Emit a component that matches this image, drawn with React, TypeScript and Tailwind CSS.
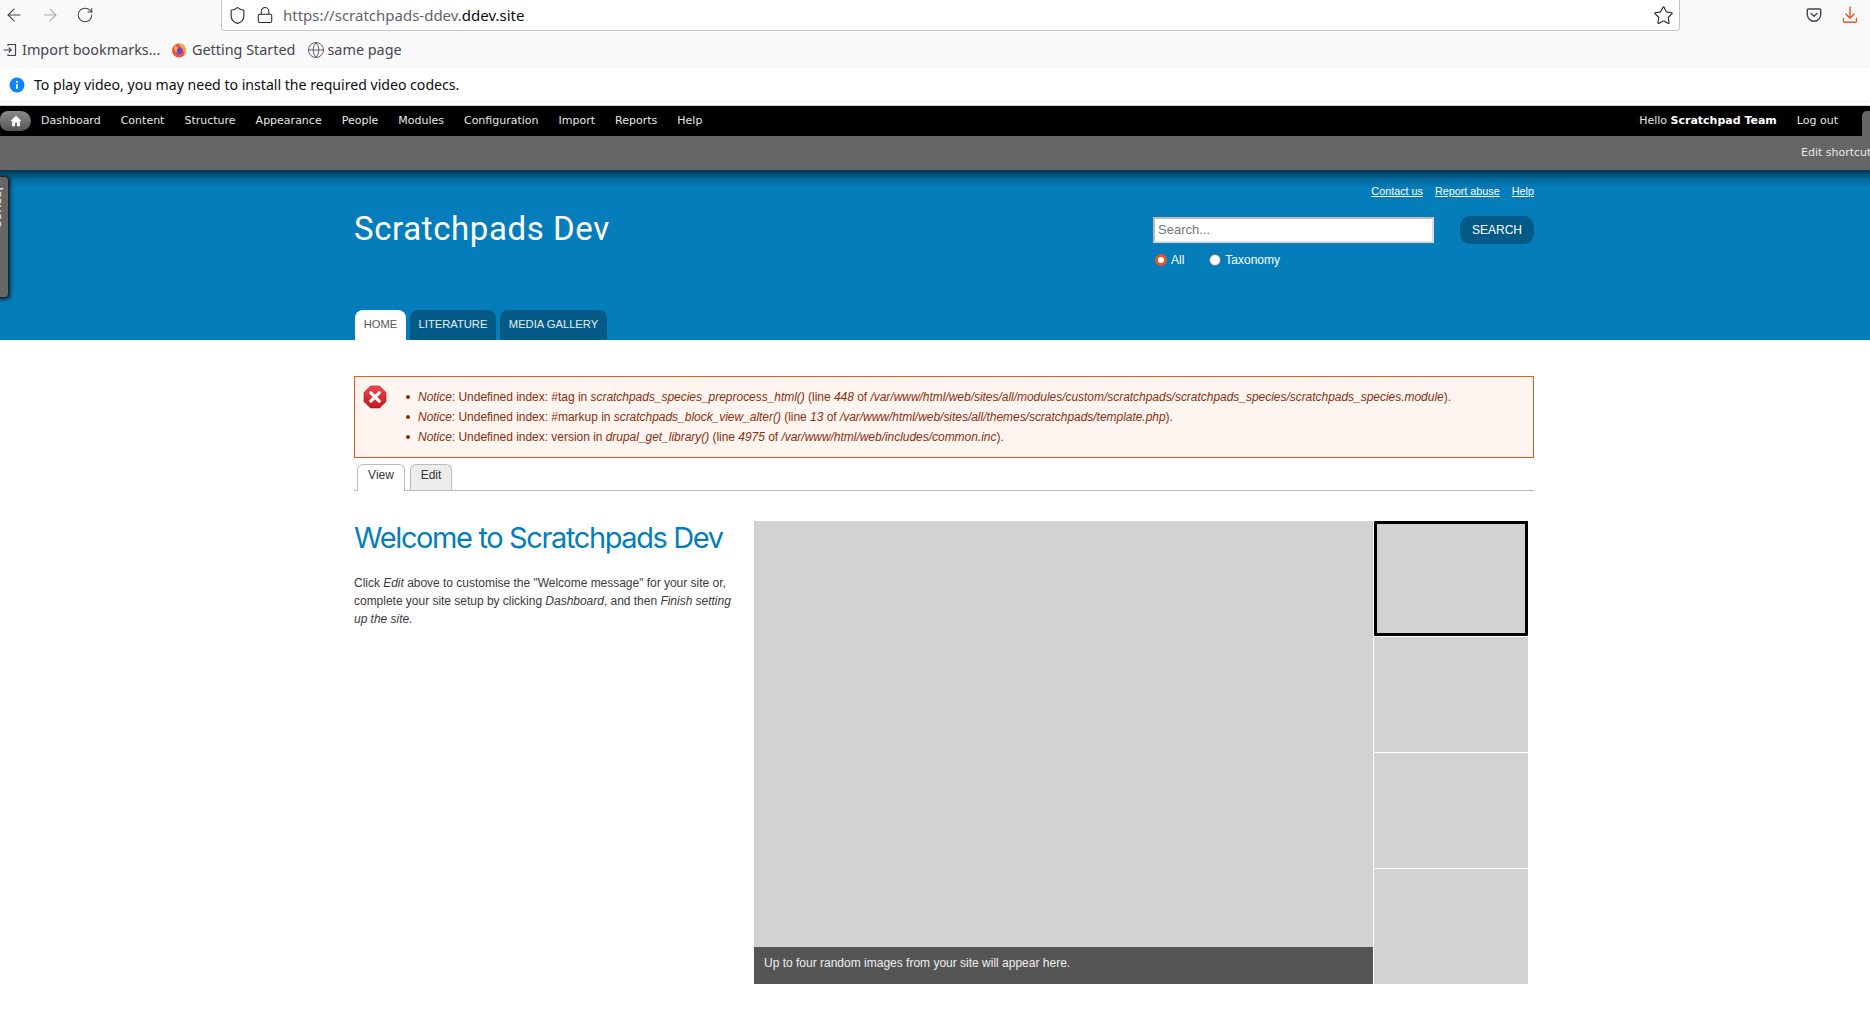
import React from "react";
import { ArrowLeft, ArrowRight, RotateCw, Shield, Lock, Star, Globe } from "lucide-react";

const adminLinks = ["Dashboard", "Content", "Structure", "Appearance", "People", "Modules", "Configuration", "Import", "Reports", "Help"];

const notices = [
  { index: "#tag", fn: "scratchpads_species_preprocess_html()", line: "448", file: "/var/www/html/web/sites/all/modules/custom/scratchpads/scratchpads_species/scratchpads_species.module" },
  { index: "#markup", fn: "scratchpads_block_view_alter()", line: "13", file: "/var/www/html/web/sites/all/themes/scratchpads/template.php" },
  { index: "version", fn: "drupal_get_library()", line: "4975", file: "/var/www/html/web/includes/common.inc" },
];

const FirefoxLogo = () => (
  <svg width="16" height="16" viewBox="0 0 16 16">
    <circle cx="8" cy="8.6" r="7" fill="#f5533d" />
    <path d="M8 1.6a7 7 0 0 1 7 7c0 2-1 4-2.6 5.2 1-2 .8-5-1.4-7C9.600 5.500 8.500 4 8 1.600z" fill="#ffa436" />
    <circle cx="8" cy="8.600" r="3.600" fill="#7a3fc4" />
    <path d="M4.400 3.400C5 5 6.500 5.500 8 5.600 5.800 6.500 5 9 6.200 11 3.800 10 2.500 6 4.400 3.400z" fill="#ffbd4f" />
  </svg>
);

const PocketIcon = () => (
  <svg width="16" height="16" viewBox="0 0 16 16" fill="none" stroke="#45454d" strokeWidth="1.4" strokeLinecap="round" strokeLinejoin="round">
    <path d="M2.200 2h11.600c.5 0 .9.400.9.900V7.500a6.700 6.700 0 0 1-13.400 0V2.900c0-.5.400-.9.900-.9z" />
    <path d="M5 6.500l3 2.800 3-2.800" />
  </svg>
);

const DownloadIcon = () => (
  <svg width="16" height="18" viewBox="0 0 16 18" fill="none" stroke="#e8562a" strokeWidth="1.4" strokeLinecap="round" strokeLinejoin="round">
    <path d="M8 1v11M3.800 8l4.200 4.200L12.200 8" />
    <path d="M1.500 12.500v2.800c0 .6.400 1 1 1h11c.6 0 1-.4 1-1v-2.800" />
  </svg>
);

const ImportIcon = () => (
  <svg width="14" height="14" viewBox="0 0 14 14" fill="none" stroke="#45454d" strokeWidth="1.2" strokeLinecap="round" strokeLinejoin="round">
    <path d="M5 2.500V1.500h7.500v11H5v-1" />
    <path d="M1 7h7M6 4.800L8.200 7 6 9.200" />
  </svg>
);

const InfoIcon = () => (
  <svg width="16" height="16" viewBox="0 0 16 16">
    <circle cx="8" cy="8" r="7.500" fill="#0a84ff" />
    <rect x="7.100" y="7" width="1.800" height="5" rx=".6" fill="#fff" />
    <circle cx="8" cy="4.800" r="1.100" fill="#fff" />
  </svg>
);

const ErrorIcon = () => (
  <svg width="24" height="24" viewBox="0 0 24 24">
    <defs>
      <linearGradient id="err" x1="0" y1="0" x2="0" y2="1">
        <stop offset="0" stopColor="#ee4a50" />
        <stop offset="1" stopColor="#c4141e" />
      </linearGradient>
    </defs>
    <path d="M7.500 1h9L23 7.500v9L16.500 23h-9L1 16.500v-9z" fill="url(#err)" stroke="#a01018" strokeWidth=".6" strokeLinejoin="round" />
    <path d="M7.800 7.800l8.400 8.400M16.200 7.800l-8.400 8.400" stroke="#fff" strokeWidth="3.200" strokeLinecap="round" />
  </svg>
);

const HomeIcon = () => (
  <svg width="12" height="12" viewBox="0 0 12 12" fill="#fff">
    <path d="M6 .8L.4 6h1.700v5.200h2.900V7.800h2v3.400h2.900V6h1.700z" />
  </svg>
);

const App = () => {
  return (
    <div className="h-[1018px] w-[1870px] overflow-hidden bg-white relative font-['Liberation_Sans',sans-serif]">
      {/* Browser chrome */}
      <div className="bg-[#f9f9fa] h-[68px] font-['Noto_Sans',sans-serif] text-[#45454d]">
        <div className="h-[31px] flex items-start">
          <div className="w-[221px] h-[30px] flex items-center pl-[4px] gap-[16px]">
            <ArrowLeft size={20} strokeWidth={1.3} />
            <ArrowRight size={20} strokeWidth={1.3} className="text-[#a8a8ad]" />
            <RotateCw size={18} strokeWidth={1.4} />
          </div>
          <div className="w-[1459px] h-[31px] bg-white border border-t-0 border-[#c4c4c8] rounded-b-[4px] flex items-center pl-[6px] pr-[5px]">
            <Shield size={19} strokeWidth={1.4} className="text-[#2a2a2e]" />
            <Lock size={18} strokeWidth={1.4} className="ml-[9px] text-[#2a2a2e]" />
            <span className="ml-[9px] text-[15px] text-[#63636b]">
              https://scratchpads-ddev.<span className="text-[#0c0c0d]">ddev.site</span>
            </span>
            <Star size={21} strokeWidth={1.3} className="ml-auto text-[#2a2a2e]" />
          </div>
          <div className="flex-1 h-[30px] flex items-center pl-[126px] gap-[20px]">
            <PocketIcon />
            <DownloadIcon />
          </div>
        </div>
        <div className="h-[37px] flex items-center pl-[3px] text-[14.4px] text-[#45454d]">
          <ImportIcon />
          <span className="ml-[5px] w-[149px]">Import bookmarks...</span>
          <FirefoxLogo />
          <span className="ml-[5px]">Getting Started</span>
          <Globe size={18} strokeWidth={1.1} className="ml-[12px]" />
          <span className="ml-[2px]">same page</span>
        </div>
      </div>
      <div className="h-[34px] bg-white flex items-center pl-[9px] border-b border-[#eeeeee] font-['Noto_Sans',sans-serif] text-[14.1px] text-[#0c0c0d]">
        <InfoIcon />
        <span className="ml-[9px]">To play video, you may need to install the required video codecs.</span>
      </div>
      <div className="h-[4px] bg-white border-b border-[#cfcfd1]" />

      {/* Admin toolbar */}
      <div className="h-[30px] bg-black flex items-center text-[#e8e8e8] text-[11px] font-['DejaVu_Sans',sans-serif] relative">
        <div className="w-[31px] h-[20px] rounded-r-[10px] rounded-l-[8px] bg-[linear-gradient(#8a8a8a,#555555)] flex items-center justify-center">
          <HomeIcon />
        </div>
        <div className="flex ml-[10px] gap-[20px] pt-[1px]">
          {adminLinks.map((link) => (
            <span key={link}>{link}</span>
          ))}
        </div>
        <span className="ml-auto pt-[1px]">
          Hello <b className="text-white">Scratchpad Team</b>
        </span>
        <span className="ml-[20px] mr-[32px] pt-[1px]">Log out</span>
        <div className="absolute right-0 bottom-0 w-[8px] h-[25px] rounded-tl-[5px] bg-[#666666]" />
      </div>
      <div className="h-[34px] bg-[#666666] flex items-center overflow-hidden text-[#e8e8e8] text-[11px] font-['DejaVu_Sans',sans-serif] pt-[1px]">
        <span className="whitespace-nowrap ml-[1801px]">Edit shortcuts</span>
      </div>

      {/* Site header */}
      <div className="h-[170px] bg-[linear-gradient(#013550_0px,#04689c_9px,#057dbb_18px)] flex flex-col pl-[354px] w-full">
        <div className="w-[1180px] flex justify-between">
          <div className="pt-[37px]">
            <div className="font-['Roboto',sans-serif] text-[33px] leading-[44px] text-white tracking-[0.6px]">Scratchpads Dev</div>
          </div>
          <div className="pt-[14px] flex flex-col items-end">
            <div className="flex gap-[12px] text-[10.8px] leading-[14px] text-white underline">
              <span>Contact us</span>
              <span>Report abuse</span>
              <span>Help</span>
            </div>
            <div className="mt-[18px] flex items-center">
              <div className="w-[281px] h-[26px] bg-white border-2 border-[#bbbbbb] border-b-[#dddddd] border-r-[#dddddd] pl-[3px] flex items-center text-[13px] text-[#757575]">Search...</div>
              <div className="ml-[26px] w-[74px] h-[28px] rounded-[10px] bg-[#035a87] text-white text-[12px] flex items-center justify-center pb-[1px]">SEARCH</div>
            </div>
            <div className="mt-[7px] w-[381px] flex items-center text-[12px] text-white">
              <span className="w-[12px] h-[12px] rounded-full bg-white border-[3px] border-[#e8552d] ml-[2px]" />
              <span className="ml-[4px]">All</span>
              <span className="w-[12px] h-[12px] rounded-full bg-white border border-[#777777] ml-[25px]" />
              <span className="ml-[4px]">Taxonomy</span>
            </div>
          </div>
        </div>
        <div className="mt-auto flex gap-[4px] ml-[1px] text-[11.2px]">
          <div className="w-[51px] h-[30px] rounded-t-[8px] bg-white text-[#555555] flex items-center justify-center pb-[2px]">HOME</div>
          <div className="w-[86px] h-[30px] rounded-t-[8px] bg-[#035a87] text-[#e8f0f4] flex items-center justify-center pb-[2px]">LITERATURE</div>
          <div className="w-[107px] h-[30px] rounded-t-[8px] bg-[#035a87] text-[#e8f0f4] flex items-center justify-center pb-[2px]">MEDIA GALLERY</div>
        </div>
      </div>

      {/* Main content */}
      <div className="ml-[354px] w-[1180px] pt-[36px]">
        <div className="h-[82px] bg-[#fef5f1] border border-[#ed541d] flex items-start text-[#8c2e0b] text-[12px] tracking-[-0.03px]">
          <div className="pl-[8px] pt-[8px] w-[51px] shrink-0"><ErrorIcon /></div>
          <ul className="pt-[10px]">
            {notices.map((n) => (
              <li key={n.index} className="h-[20px] leading-[20px] flex items-center whitespace-pre">
                <span className="w-[4px] h-[4px] rounded-full bg-[#8c2e0b] mr-[8px]" />
                <span>
                  <em>Notice</em>: Undefined index: {n.index} in <em>{n.fn}</em> (line <em>{n.line}</em> of <em>{n.file}</em>).
                </span>
              </li>
            ))}
          </ul>
        </div>

        <div className="mt-[6px] h-[27px] border-b border-[#bbbbbb] flex pl-[3px] gap-[5px] text-[12px] text-[#333333]">
          <div className="w-[48px] h-[27px] bg-white border border-b-0 border-[#bbbbbb] rounded-t-[6px] flex items-center justify-center pb-[6px] -mb-px z-10">View</div>
          <div className="w-[42px] h-[26px] bg-[#ededed] border border-b-0 border-[#bbbbbb] rounded-t-[6px] flex items-center justify-center pb-[5px]">Edit</div>
        </div>

        <div className="mt-[30px] flex">
          <div className="w-[400px] shrink-0">
            <h1 className="font-['Inter',sans-serif] text-[29px] leading-[34px] tracking-[-1.38px] text-[#057dbb]">Welcome to Scratchpads Dev</h1>
            <p className="mt-[19px] w-[385px] text-[12px] leading-[18px] text-[#3b3b3b] tracking-[-0.02px]">
              Click <em>Edit</em> above to customise the "Welcome message" for your site or, complete your site setup by clicking <em>Dashboard</em>, and then <em>Finish setting up the site.</em>
            </p>
          </div>
          <div className="flex gap-[1px]">
            <div className="w-[619px] h-[463px] bg-[#d2d2d2] flex flex-col justify-end">
              <div className="h-[37px] bg-[#555555] text-[#f0f0f0] text-[12px] flex items-center pl-[10px] pb-[5px]">Up to four random images from your site will appear here.</div>
            </div>
            <div className="flex flex-col gap-[1px]">
              <div className="w-[154px] h-[115px] bg-[#d2d2d2] border-[3px] border-black rounded-[1px]" />
              <div className="w-[154px] h-[115px] bg-[#d2d2d2]" />
              <div className="w-[154px] h-[115px] bg-[#d2d2d2]" />
              <div className="w-[154px] h-[115px] bg-[#d2d2d2]" />
            </div>
          </div>
        </div>
      </div>

      {/* Issues side tab */}
      <div className="absolute left-[-6px] top-[176px] w-[15px] h-[122px] rounded-[4px] bg-[#666666] border border-[#222222] shadow-[1px_1px_4px_rgba(0,0,0,0.8)] overflow-hidden">
        <span className="absolute left-[-4px] top-[10px] text-[13px] leading-[14px] text-[#eeeeee] [writing-mode:vertical-rl] font-['DejaVu_Sans',sans-serif]">Issues</span>
      </div>
    </div>
  );
};

export default App;
